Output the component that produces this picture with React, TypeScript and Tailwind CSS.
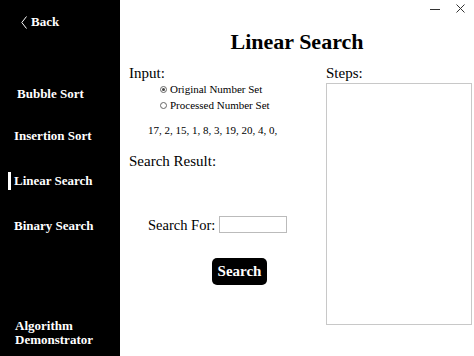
import React from "react";

const serif = { fontFamily: '"Liberation Serif", "Times New Roman", serif' };

export default function App() {
  return (
    <div className="flex w-[474px] h-[356px] bg-white overflow-hidden" style={serif}>
      <aside className="w-[120px] shrink-0 bg-black text-white font-bold flex flex-col">
        <div className="h-[44px] flex items-center pl-[21px] gap-[4px] text-[13px]">
          <svg width="6" height="13" viewBox="0 0 6 13" className="shrink-0">
            <path d="M5.5 0.5 L0.8 6.5 L5.5 12.5" fill="none" stroke="white" strokeWidth="1" />
          </svg>
          <span className="leading-[14px]">Back</span>
        </div>
        <div className="mt-[39px] h-[22px] flex items-center pl-[17px] text-[13px]">Bubble Sort</div>
        <div className="mt-[20px] h-[22px] flex items-center pl-[14px] text-[13px]">Insertion Sort</div>
        <div className="mt-[23px] h-[22px] flex items-center text-[13px]">
          <span className="w-[3px] h-[18px] bg-white ml-[8px] mr-[3px]" />
          <span>Linear Search</span>
        </div>
        <div className="mt-[23px] h-[22px] flex items-center pl-[14px] text-[13px]">Binary Search</div>
        <div className="mt-auto mb-[10px] pl-[15px] text-[13px] leading-[13.5px]">
          <div>Algorithm</div>
          <div>Demonstrator</div>
        </div>
      </aside>
      <main className="flex-1 flex flex-col text-black">
        <div className="h-[17px] flex justify-end items-center gap-[16px] pr-[9px]">
          <svg width="10" height="10" viewBox="0 0 10 10">
            <path d="M0 5.5 H10" stroke="#333" strokeWidth="1" />
          </svg>
          <svg width="9" height="9" viewBox="0 0 9 9">
            <path d="M0.5 0.5 L8.5 8.5 M8.5 0.5 L0.5 8.5" stroke="#333" strokeWidth="1" />
          </svg>
        </div>
        <h1 className="mt-[12px] text-[22px] leading-[26px] font-bold text-center">Linear Search</h1>
        <div className="mt-[10px] flex pl-[9px] pr-[2px]">
          <div className="flex-1 flex flex-col">
            <div className="text-[15px] leading-[16px]">Input:</div>
            <div className="pl-[31px] text-[11px] leading-[16px] flex flex-col">
              <div className="flex items-center gap-[3px]">
                <span className="w-[7px] h-[7px] rounded-full border border-[#666] flex items-center justify-center">
                  <span className="w-[3px] h-[3px] rounded-full bg-[#444]" />
                </span>
                <span>Original Number Set</span>
              </div>
              <div className="flex items-center gap-[3px]">
                <span className="w-[7px] h-[7px] rounded-full border border-[#666]" />
                <span>Processed Number Set</span>
              </div>
            </div>
            <div className="mt-[9px] pl-[19px] text-[11px] leading-[16px]">17, 2, 15, 1, 8, 3, 19, 20, 4, 0,</div>
            <div className="mt-[15px] text-[15px] leading-[16px]">Search Result:</div>
            <div className="mt-[47px] pl-[19px] flex items-center gap-[4px]">
              <span className="text-[14.5px] leading-[16px]">Search For:</span>
              <input type="text" className="w-[68px] h-[17px] border border-[#bbb] outline-none" />
            </div>
            <div className="mt-[25px] pl-[83px]">
              <button className="w-[55px] h-[27px] bg-black text-white font-bold text-[15px] rounded-[5px] flex items-center justify-center" style={serif}>
                Search
              </button>
            </div>
          </div>
          <div className="w-[146px] flex flex-col">
            <div className="text-[15px] leading-[16px]">Steps:</div>
            <div className="mt-[2px] h-[242px] border border-[#c8c8c8]" />
          </div>
        </div>
      </main>
    </div>
  );
}
